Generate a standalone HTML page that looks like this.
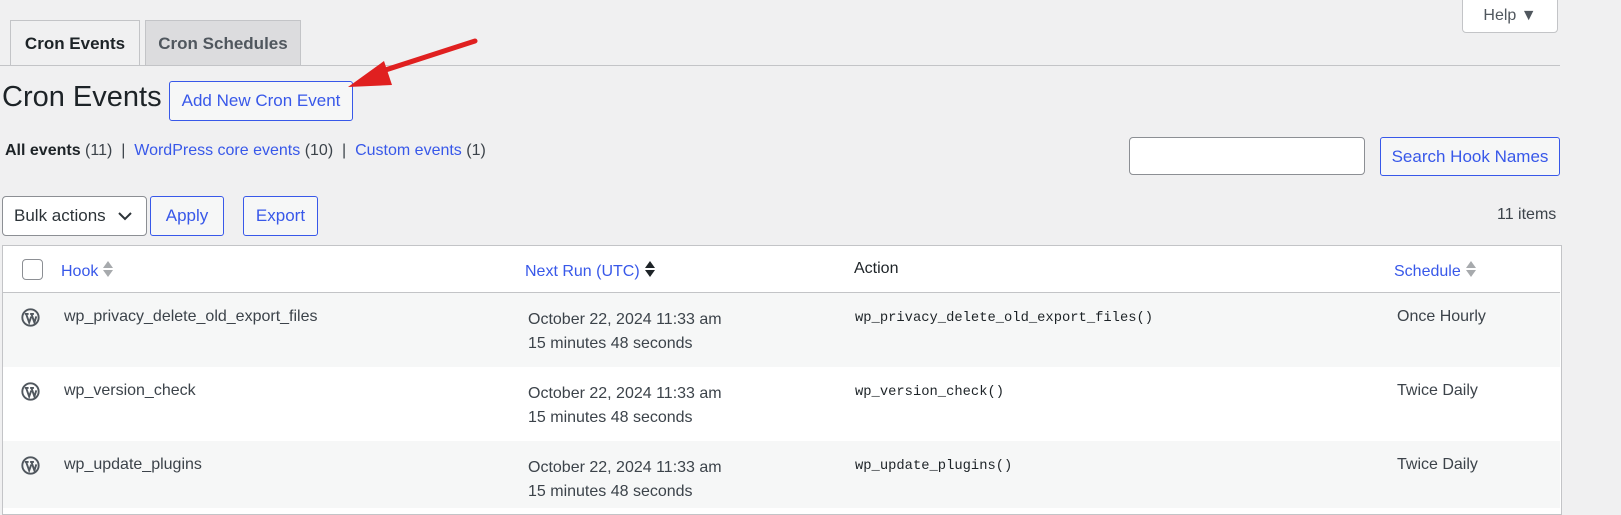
<!DOCTYPE html>
<html><head><style>
body{margin:0;width:1621px;height:508px;background:#f0f0f1;font-family:"Liberation Sans",sans-serif;color:#3c434a;position:relative;overflow:hidden;font-size:16px}
.a{position:absolute}
.tab{position:absolute;top:20px;height:45px;border:1px solid #c3c4c7;border-bottom:none;font-weight:bold;font-size:17px;line-height:45px;text-align:center;box-sizing:border-box}
.btn{position:absolute;border:1px solid #3858e9;color:#3858e9;background:#f6f7f7;border-radius:3px;box-sizing:border-box;text-align:center;font-size:17px}
a{color:#3858e9;text-decoration:none}
.row{position:absolute;left:3px;width:1557px}
.mono{font-family:"Liberation Mono",monospace;font-size:13.8px;color:#1d2327}
.wp{position:absolute;left:21px;width:19px;height:19px}
.s{vertical-align:-2px;margin-left:4px}
</style></head><body>
<div class="tab" style="left:10px;width:130px;background:#f0f0f1;color:#1d2327;height:46px">Cron Events</div>
<div class="tab" style="left:145px;width:156px;background:#dcdcde;color:#50575e">Cron Schedules</div>
<div class="a" style="left:0;top:65px;width:1560px;border-top:1px solid #c3c4c7"></div>
<div class="a" style="left:1462px;top:-5px;width:96px;height:38px;background:#fff;border:1px solid #c3c4c7;border-radius:0 0 4px 4px;box-sizing:border-box;font-size:16px;line-height:40px;text-align:center;color:#50575e">Help ▼</div>
<div class="a" style="left:2px;top:81px;font-size:29px;color:#1d2327">Cron Events</div>
<div class="btn" style="left:169px;top:81px;width:184px;height:40px;line-height:38px">Add New Cron Event</div>
<svg class="a" style="left:340px;top:35px" width="140" height="60"><line x1="135" y1="6" x2="30" y2="40" stroke="#e02020" stroke-width="5" stroke-linecap="round"/><polygon points="8,52 44,26 52,50" fill="#e02020"/></svg>
<div class="a" style="left:5px;top:142px;font-size:16px"><b style="color:#1d2327">All events</b> (11) &nbsp;| &nbsp;<a>WordPress core events</a> (10) &nbsp;| &nbsp;<a>Custom events</a> (1)</div>
<div class="a" style="left:1129px;top:137px;width:236px;height:38px;background:#fff;border:1px solid #8c8f94;border-radius:4px;box-sizing:border-box"></div>
<div class="btn" style="left:1380px;top:137px;width:180px;height:39px;line-height:37px">Search Hook Names</div>
<div class="a" style="left:2px;top:196px;width:145px;height:40px;background:#fff;border:1px solid #8c8f94;border-radius:4px;box-sizing:border-box;font-size:17px;line-height:38px;padding-left:11px;color:#2c3338">Bulk actions</div>
<svg class="a" style="left:118px;top:211px" width="14" height="10"><path d="M1 2l6 6 6-6" stroke="#2c3338" stroke-width="2" fill="none"/></svg>
<div class="btn" style="left:150px;top:196px;width:74px;height:40px;line-height:38px">Apply</div>
<div class="btn" style="left:243px;top:196px;width:75px;height:40px;line-height:38px">Export</div>
<div class="a" style="left:1497px;top:206px;color:#3c434a">11 items</div>
<div class="a" style="left:2px;top:245px;width:1560px;height:270px;border:1px solid #c3c4c7;background:#fff;box-sizing:border-box"></div>
<div class="row" style="top:246px;height:46px;background:#fff;border-bottom:1px solid #c3c4c7"></div>
<div class="a" style="left:22px;top:259px;width:19px;height:19px;border:1px solid #8c8f94;border-radius:4px;background:#fff"></div>
<div class="a" style="left:61px;top:260px"><a>Hook</a><svg class="s" width="12" height="18"><path d="M6 1l5 7H1z" fill="#a7aaad"/><path d="M6 17l5-7H1z" fill="#a7aaad"/></svg></div>
<div class="a" style="left:525px;top:260px"><a>Next Run (UTC)</a><svg class="s" width="12" height="18"><path d="M6 1l5 7H1z" fill="#1d2327"/><path d="M6 17l5-7H1z" fill="#1d2327"/></svg></div>
<div class="a" style="left:854px;top:260px;color:#1d2327">Action</div>
<div class="a" style="left:1394px;top:260px"><a>Schedule</a><svg class="s" width="12" height="18"><path d="M6 1l5 7H1z" fill="#a7aaad"/><path d="M6 17l5-7H1z" fill="#a7aaad"/></svg></div>
<div class="row" style="top:293px;height:74px;background:#f6f7f7"></div>
<div class="row" style="top:367px;height:74px;background:#fff"></div>
<div class="row" style="top:441px;height:67px;background:#f6f7f7"></div>
<div class="a" style="left:0;top:308px;width:1621px">
<svg class="wp" viewBox="0 0 20 20" style="top:0"><circle cx="10" cy="10" r="8.6" fill="none" stroke="#50575e" stroke-width="2"/><path d="M4 6.3h4M5.4 6.3l3.2 9 2.2-6.3M9.6 6.3h4M11 6.3l3.1 9 2-6.5" stroke="#50575e" stroke-width="2" fill="none"/></svg>
<div class="a" style="left:64px;top:0">wp_privacy_delete_old_export_files</div>
<div class="a" style="left:528px;top:0;line-height:24px">October 22, 2024 11:33 am<br>15 minutes 48 seconds</div>
<div class="a mono" style="left:855px;top:3px">wp_privacy_delete_old_export_files()</div>
<div class="a" style="left:1397px;top:0">Once Hourly</div>
</div>
<div class="a" style="left:0;top:382px;width:1621px">
<svg class="wp" viewBox="0 0 20 20" style="top:0"><circle cx="10" cy="10" r="8.6" fill="none" stroke="#50575e" stroke-width="2"/><path d="M4 6.3h4M5.4 6.3l3.2 9 2.2-6.3M9.6 6.3h4M11 6.3l3.1 9 2-6.5" stroke="#50575e" stroke-width="2" fill="none"/></svg>
<div class="a" style="left:64px;top:0">wp_version_check</div>
<div class="a" style="left:528px;top:0;line-height:24px">October 22, 2024 11:33 am<br>15 minutes 48 seconds</div>
<div class="a mono" style="left:855px;top:3px">wp_version_check()</div>
<div class="a" style="left:1397px;top:0">Twice Daily</div>
</div>
<div class="a" style="left:0;top:456px;width:1621px">
<svg class="wp" viewBox="0 0 20 20" style="top:0"><circle cx="10" cy="10" r="8.6" fill="none" stroke="#50575e" stroke-width="2"/><path d="M4 6.3h4M5.4 6.3l3.2 9 2.2-6.3M9.6 6.3h4M11 6.3l3.1 9 2-6.5" stroke="#50575e" stroke-width="2" fill="none"/></svg>
<div class="a" style="left:64px;top:0">wp_update_plugins</div>
<div class="a" style="left:528px;top:0;line-height:24px">October 22, 2024 11:33 am<br>15 minutes 48 seconds</div>
<div class="a mono" style="left:855px;top:3px">wp_update_plugins()</div>
<div class="a" style="left:1397px;top:0">Twice Daily</div>
</div>
</body></html>
